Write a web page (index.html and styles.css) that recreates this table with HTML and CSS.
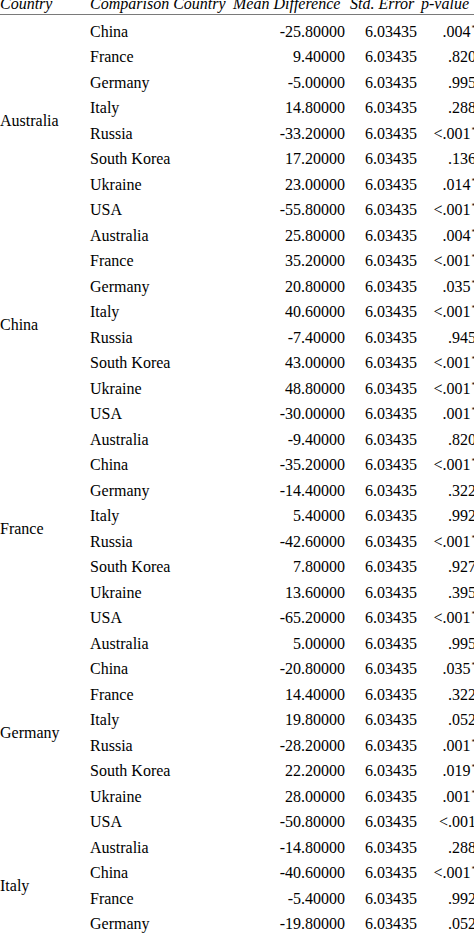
FILE: index.html
```html
<!DOCTYPE html>
<html lang="en">
<head>
<meta charset="utf-8">
<title>Post hoc comparisons</title>
<link rel="stylesheet" href="styles.css">
</head>
<body>
<table class="stats">
  <colgroup>
    <col class="c-country">
    <col class="c-comp">
    <col class="c-mean">
    <col class="c-se">
    <col class="c-p">
  </colgroup>
  <thead>
    <tr>
      <th class="h-country">Country</th>
      <th class="h-comp">Comparison Country</th>
      <th class="h-mean">Mean Difference</th>
      <th class="h-se">Std. Error</th>
      <th class="h-p">p-value</th>
    </tr>
  </thead>
  <tbody class="gap"><tr><td colspan="5"></td></tr></tbody>
  <tbody>
    <tr><td class="group" rowspan="8">Australia</td><td class="comp">China</td><td class="num mean">-25.80000</td><td class="num se">6.03435</td><td class="num p">.004<sup>*</sup></td></tr>
    <tr><td class="comp">France</td><td class="num mean">9.40000</td><td class="num se">6.03435</td><td class="num p">.820</td></tr>
    <tr><td class="comp">Germany</td><td class="num mean">-5.00000</td><td class="num se">6.03435</td><td class="num p">.995</td></tr>
    <tr><td class="comp">Italy</td><td class="num mean">14.80000</td><td class="num se">6.03435</td><td class="num p">.288</td></tr>
    <tr><td class="comp">Russia</td><td class="num mean">-33.20000</td><td class="num se">6.03435</td><td class="num p">&lt;.001<sup>*</sup></td></tr>
    <tr><td class="comp">South Korea</td><td class="num mean">17.20000</td><td class="num se">6.03435</td><td class="num p">.136</td></tr>
    <tr><td class="comp">Ukraine</td><td class="num mean">23.00000</td><td class="num se">6.03435</td><td class="num p">.014<sup>*</sup></td></tr>
    <tr><td class="comp">USA</td><td class="num mean">-55.80000</td><td class="num se">6.03435</td><td class="num p">&lt;.001<sup>*</sup></td></tr>

    <tr><td class="group" rowspan="8">China</td><td class="comp">Australia</td><td class="num mean">25.80000</td><td class="num se">6.03435</td><td class="num p">.004<sup>*</sup></td></tr>
    <tr><td class="comp">France</td><td class="num mean">35.20000</td><td class="num se">6.03435</td><td class="num p">&lt;.001<sup>*</sup></td></tr>
    <tr><td class="comp">Germany</td><td class="num mean">20.80000</td><td class="num se">6.03435</td><td class="num p">.035<sup>*</sup></td></tr>
    <tr><td class="comp">Italy</td><td class="num mean">40.60000</td><td class="num se">6.03435</td><td class="num p">&lt;.001<sup>*</sup></td></tr>
    <tr><td class="comp">Russia</td><td class="num mean">-7.40000</td><td class="num se">6.03435</td><td class="num p">.945</td></tr>
    <tr><td class="comp">South Korea</td><td class="num mean">43.00000</td><td class="num se">6.03435</td><td class="num p">&lt;.001<sup>*</sup></td></tr>
    <tr><td class="comp">Ukraine</td><td class="num mean">48.80000</td><td class="num se">6.03435</td><td class="num p">&lt;.001<sup>*</sup></td></tr>
    <tr><td class="comp">USA</td><td class="num mean">-30.00000</td><td class="num se">6.03435</td><td class="num p">.001<sup>*</sup></td></tr>

    <tr><td class="group" rowspan="8">France</td><td class="comp">Australia</td><td class="num mean">-9.40000</td><td class="num se">6.03435</td><td class="num p">.820</td></tr>
    <tr><td class="comp">China</td><td class="num mean">-35.20000</td><td class="num se">6.03435</td><td class="num p">&lt;.001<sup>*</sup></td></tr>
    <tr><td class="comp">Germany</td><td class="num mean">-14.40000</td><td class="num se">6.03435</td><td class="num p">.322</td></tr>
    <tr><td class="comp">Italy</td><td class="num mean">5.40000</td><td class="num se">6.03435</td><td class="num p">.992</td></tr>
    <tr><td class="comp">Russia</td><td class="num mean">-42.60000</td><td class="num se">6.03435</td><td class="num p">&lt;.001<sup>*</sup></td></tr>
    <tr><td class="comp">South Korea</td><td class="num mean">7.80000</td><td class="num se">6.03435</td><td class="num p">.927</td></tr>
    <tr><td class="comp">Ukraine</td><td class="num mean">13.60000</td><td class="num se">6.03435</td><td class="num p">.395</td></tr>
    <tr><td class="comp">USA</td><td class="num mean">-65.20000</td><td class="num se">6.03435</td><td class="num p">&lt;.001<sup>*</sup></td></tr>

    <tr><td class="group" rowspan="8">Germany</td><td class="comp">Australia</td><td class="num mean">5.00000</td><td class="num se">6.03435</td><td class="num p">.995</td></tr>
    <tr><td class="comp">China</td><td class="num mean">-20.80000</td><td class="num se">6.03435</td><td class="num p">.035<sup>*</sup></td></tr>
    <tr><td class="comp">France</td><td class="num mean">14.40000</td><td class="num se">6.03435</td><td class="num p">.322</td></tr>
    <tr><td class="comp">Italy</td><td class="num mean">19.80000</td><td class="num se">6.03435</td><td class="num p">.052</td></tr>
    <tr><td class="comp">Russia</td><td class="num mean">-28.20000</td><td class="num se">6.03435</td><td class="num p">.001<sup>*</sup></td></tr>
    <tr><td class="comp">South Korea</td><td class="num mean">22.20000</td><td class="num se">6.03435</td><td class="num p">.019<sup>*</sup></td></tr>
    <tr><td class="comp">Ukraine</td><td class="num mean">28.00000</td><td class="num se">6.03435</td><td class="num p">.001<sup>*</sup></td></tr>
    <tr><td class="comp">USA</td><td class="num mean">-50.80000</td><td class="num se">6.03435</td><td class="num p">&lt;.001</td></tr>

    <tr><td class="group" rowspan="4">Italy</td><td class="comp">Australia</td><td class="num mean">-14.80000</td><td class="num se">6.03435</td><td class="num p">.288</td></tr>
    <tr><td class="comp">China</td><td class="num mean">-40.60000</td><td class="num se">6.03435</td><td class="num p">&lt;.001<sup>*</sup></td></tr>
    <tr><td class="comp">France</td><td class="num mean">-5.40000</td><td class="num se">6.03435</td><td class="num p">.992</td></tr>
    <tr><td class="comp">Germany</td><td class="num mean">-19.80000</td><td class="num se">6.03435</td><td class="num p">.052</td></tr>
  </tbody>
</table>
</body>
</html>
```

FILE: styles.css
```css
html, body {
  margin: 0;
  padding: 0;
  background: #ffffff;
  overflow: hidden;
}

body {
  font-family: "Liberation Serif", "Times New Roman", serif;
  font-size: 16px;
  color: #000000;
}

.stats {
  border-collapse: collapse;
  border-spacing: 0;
  table-layout: fixed;
  width: 476px;
  margin-top: -4.6px;
}

.c-country { width: 90px; }
.c-comp { width: 143px; }
.c-mean { width: 112px; }
.c-se { width: 72px; }
.c-p { width: 59px; }

.stats th {
  font-style: italic;
  font-weight: normal;
  text-align: left;
  white-space: nowrap;
  height: 18.5px;
  line-height: 18.5px;
  padding: 0;
  border-bottom: 1px solid #7a7a7a;
}

.stats .h-country { padding-left: 0; }
.stats .h-comp { padding-left: 0; }
.stats .h-mean { padding-left: 0; }
.stats .h-se { padding-left: 5px; }
.stats .h-p { padding-left: 4px; }

.gap td {
  height: 4px;
  padding: 0;
  line-height: 0;
}

.stats td {
  padding: 0;
  white-space: nowrap;
}

.stats tbody tr {
  height: 25.5px;
}

.stats .gap tr {
  height: 4px;
}

.group {
  vertical-align: middle;
  text-align: left;
}

.comp {
  text-align: left;
}

.num {
  text-align: right;
}

.mean { padding-right: 2px; }
.se { padding-right: 2px; }
.p { padding-right: 2px; }

.p sup {
  font-size: 9px;
  line-height: 0;
  vertical-align: 6px;
  margin-left: 1px;
}
```
